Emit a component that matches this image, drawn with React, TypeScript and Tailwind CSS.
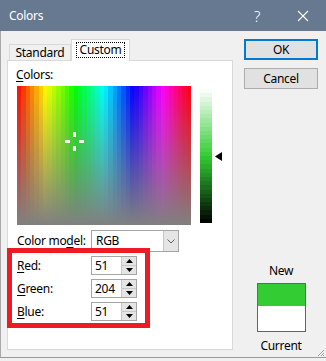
import React from "react";

const SPEC_W = 174;
const SPEC_H = 139;
const COLS = 40;
const BAR_W = 12;
const BAR_H = 134;
const ROWS = 32;

function Spectrum() {
  const cols = Array.from({ length: COLS }, (_, i) => i);
  const cw = SPEC_W / COLS;
  return (
    <svg width={SPEC_W} height={SPEC_H} className="block shrink-0" shapeRendering="crispEdges">
      <defs>
        <linearGradient id="gray" x1="0" y1="0" x2="0" y2="1">
          <stop offset="0" stopColor="#808080" stopOpacity="0" />
          <stop offset="1" stopColor="#808080" stopOpacity="1" />
        </linearGradient>
      </defs>
      {cols.map((i) => (
        <rect
          key={i}
          x={Math.round(i * cw)}
          y={0}
          width={Math.round((i + 1) * cw) - Math.round(i * cw)}
          height={SPEC_H}
          fill={`hsl(${((i + 0.5) / COLS) * 360}, 100%, 50%)`}
        />
      ))}
      <rect x={0} y={0} width={SPEC_W} height={SPEC_H} fill="url(#gray)" />
      <rect x={56} y={46} width={3} height={5} fill="#fff" />
      <rect x={56} y={60} width={3} height={5} fill="#fff" />
      <rect x={48} y={54} width={5} height={3} fill="#fff" />
      <rect x={62} y={54} width={5} height={3} fill="#fff" />
    </svg>
  );
}

function LumBar() {
  const rows = Array.from({ length: ROWS }, (_, i) => i);
  const rh = BAR_H / ROWS;
  return (
    <svg width={BAR_W} height={BAR_H} className="block shrink-0" shapeRendering="crispEdges">
      {rows.map((i) => (
        <rect
          key={i}
          x={0}
          y={Math.round(i * rh)}
          width={BAR_W}
          height={Math.round((i + 1) * rh) - Math.round(i * rh)}
          fill={`hsl(120, 60%, ${100 - ((i + 0.5) / ROWS) * 100}%)`}
        />
      ))}
    </svg>
  );
}

function Spin({ value }: { value: string }) {
  return (
    <div className="flex h-[19px] w-[46px] border border-[#a5a5a5] bg-white">
      <div className="flex-1 pl-[3px] text-[12px] leading-[17px] text-black">{value}</div>
      <div className="flex w-[15px] flex-col border-l border-[#c8c8c8]">
        <div className="flex flex-1 items-center justify-center border-b border-[#c8c8c8] bg-[#e5e5e5]">
          <svg width="7" height="4" viewBox="0 0 7 4">
            <path d="M3.5 0 L7 4 L0 4 Z" fill="#000" />
          </svg>
        </div>
        <div className="flex flex-1 items-center justify-center bg-[#e5e5e5]">
          <svg width="7" height="4" viewBox="0 0 7 4">
            <path d="M0 0 L7 0 L3.5 4 Z" fill="#000" />
          </svg>
        </div>
      </div>
    </div>
  );
}

function FieldRow({ label, u, value }: { label: string; u: string; value: string }) {
  return (
    <div className="flex h-[19px] items-center">
      <div className="w-[74px] text-[12px] leading-[16px] text-black">
        <span className="underline underline-offset-2">{u}</span>
        {label}
      </div>
      <Spin value={value} />
    </div>
  );
}

export default function App() {
  return (
    <div className="relative flex h-[361px] w-[326px] flex-col overflow-hidden bg-[#f0f0f0] font-['Noto_Sans',sans-serif] text-[12px] tracking-[-0.3px] text-black">
      {/* Title bar */}
      <div className="flex h-[31px] shrink-0 items-center bg-[#677891] pl-[9px] text-white">
        <span className="text-[12px] leading-[16px]">Colors</span>
        <div className="ml-auto flex items-center">
          <span className="mr-[37px] text-[15px] font-light leading-[16px]">?</span>
          <svg width="12" height="12" viewBox="0 0 12 12" className="mr-[17px]">
            <path d="M1 1 L11 11 M11 1 L1 11" stroke="#fff" strokeWidth="1.1" />
          </svg>
        </div>
      </div>

      {/* Body */}
      <div className="flex h-[326px] shrink-0 border-l border-[#a9a9a9] pt-[8px]">
        {/* Left column */}
        <div className="ml-[6px] flex w-[226px] flex-col">
          {/* Tabs */}
          <div className="relative z-10 -mb-px flex h-[22px] items-end pl-[2px]">
            <div className="mb-px flex h-[16px] w-[62px] items-center justify-center border border-b-0 border-[#d9d9d9] bg-[#f0f0f0] leading-[14px]">
              Standard
            </div>
            <div className="flex h-[22px] w-[59px] items-start justify-center border border-b-0 border-[#d9d9d9] bg-white pt-[2px]">
              <div className="flex h-[16px] w-[49px] items-center justify-center border border-dotted border-black leading-[14px]">
                Custom
              </div>
            </div>
          </div>

          {/* Panel */}
          <div className="flex h-[290px] flex-col border border-[#d9d9d9] bg-white pl-[9px] pt-[6px]">
            <div className="-ml-px leading-[16px]">
              <span className="underline underline-offset-2">C</span>olors:
            </div>
            <div className="mt-[3px] flex items-start">
              <Spectrum />
              <div className="ml-[9px] mt-[3px]">
                <LumBar />
              </div>
              <svg width="8" height="9" viewBox="0 0 8 9" className="ml-[3px] mt-[66px]">
                <path d="M0 4.5 L7 0 L7 9 Z" fill="#000" />
              </svg>
            </div>

            <div className="mt-[5px] flex h-[22px] items-center">
              <div className="w-[74px] leading-[16px]">
                Color mo<span className="underline underline-offset-2">d</span>el:
              </div>
              <div className="flex h-[22px] w-[88px] items-center border border-[#a5a5a5] bg-white">
                <span className="flex-1 pl-[4px] leading-[16px]">RGB</span>
                <div className="flex h-full w-[15px] items-center justify-center border-l border-[#c8c8c8] bg-[#e5e5e5]">
                  <svg width="8" height="5" viewBox="0 0 8 5">
                    <path d="M0.5 0.5 L4 4 L7.5 0.5" stroke="#606060" strokeWidth="1" fill="none" />
                  </svg>
                </div>
              </div>
            </div>

            <div className="mt-[4px] flex flex-col gap-[4px]">
              <FieldRow u="R" label="ed:" value="51" />
              <FieldRow u="G" label="reen:" value="204" />
              <FieldRow u="B" label="lue:" value="51" />
            </div>
          </div>
        </div>

        {/* Right column */}
        <div className="ml-[11px] flex w-[74px] flex-col items-center">
          <button className="flex h-[21px] w-[74px] items-center justify-center border-2 border-[#0078d7] bg-[#e1e1e1] leading-[16px]">
            OK
          </button>
          <button className="mt-[8px] flex h-[21px] w-[74px] items-center justify-center border border-[#adadad] bg-[#e1e1e1] leading-[16px]">
            Cancel
          </button>
          <div className="mt-[174px] leading-[16px]">New</div>
          <div className="mt-[4px] flex h-[49px] w-[49px] flex-col border border-[#646464]">
            <div className="h-[22px] bg-[#33cc33]" />
            <div className="flex-1 bg-white" />
          </div>
          <div className="mt-[6px] leading-[16px]">Current</div>
        </div>
      </div>

      {/* bottom edge */}
      <div className="h-[4px] shrink-0 border-t border-[#9a9a9a] bg-[#f0f0f0]" />

      {/* resize grip */}
      <svg width="8" height="8" viewBox="0 0 8 8" className="absolute bottom-[4px] right-[1px]">
        <path d="M7 1 L1 7 M7 4 L4 7 M7 6 L6 7" stroke="#a0a0a0" strokeWidth="1" />
      </svg>

      {/* red annotation */}
      <div className="pointer-events-none absolute left-[7px] top-[248px] h-[80px] w-[143px] border-[5px] border-[#ed1c24]" />
    </div>
  );
}
